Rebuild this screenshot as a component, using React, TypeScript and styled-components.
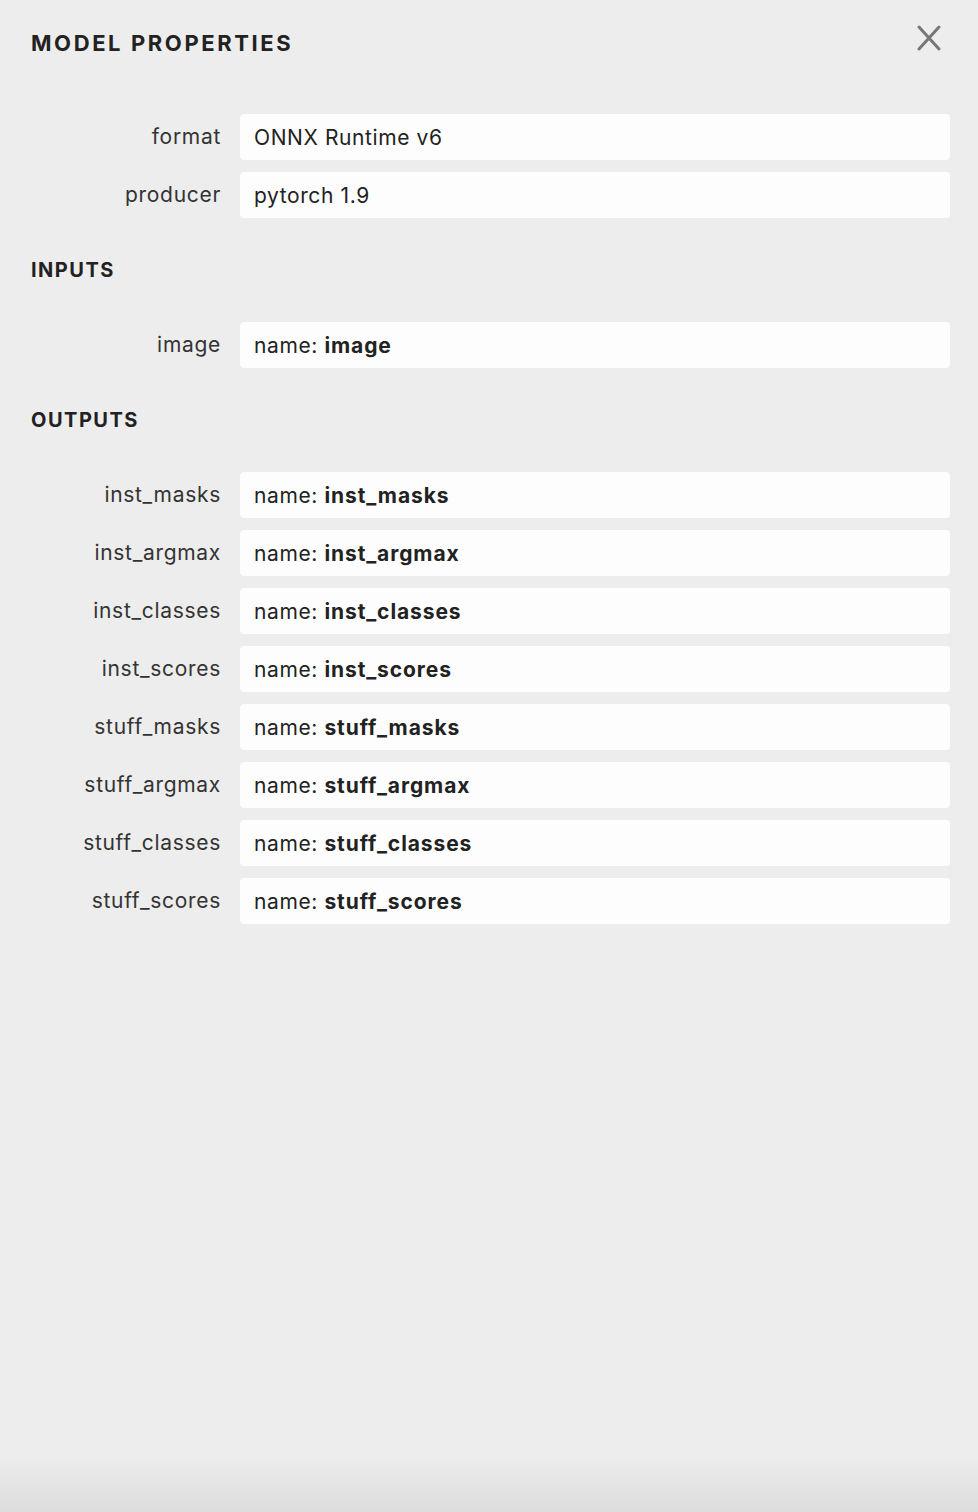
import React from "react";
import styled, { createGlobalStyle } from "styled-components";

const GlobalStyle = createGlobalStyle`
  html, body {
    margin: 0;
    padding: 0;
    background: #ededed;
  }
  body {
    font-family: Inter, "Noto Sans", "Liberation Sans", sans-serif;
    color: #222;
    -webkit-font-smoothing: antialiased;
  }
`;

const Sheet = styled.div`
  min-height: 1512px;
  box-sizing: border-box;
  padding: 24px 28px 0 31px;
  background: linear-gradient(to bottom, #ededed 0, #ededed 1455px, #dcdcdc 1512px);
`;

const Header = styled.div`
  display: flex;
  align-items: center;
  justify-content: space-between;
  height: 38px;
`;

const Title = styled.h1`
  margin: 0;
  font-size: 22px;
  font-weight: 700;
  letter-spacing: 2.6px;
  color: #222;
  line-height: 38px;
`;

const CloseButton = styled.button`
  background: none;
  border: 0;
  padding: 0;
  margin: -10px 6px 0 0;
  width: 30px;
  height: 30px;
  display: flex;
  align-items: center;
  justify-content: center;
  color: #777;
  cursor: pointer;
`;

const Section = styled.div<{ $first?: boolean }>`
  margin-top: ${(p) => (p.$first ? "52px" : "0")};
`;

const SectionTitle = styled.h2`
  margin: 40px 0;
  font-size: 20px;
  font-weight: 700;
  letter-spacing: 1.5px;
  line-height: 24px;
  color: #222;
`;

const Grid = styled.div`
  display: grid;
  grid-template-columns: 189px 1fr;
  column-gap: 20px;
  row-gap: 12px;
`;

const Label = styled.div`
  text-align: right;
  font-size: 21px;
  letter-spacing: 0.7px;
  margin-right: -1px;
  line-height: 46px;
  height: 46px;
  color: #333;
  white-space: nowrap;
`;

const Value = styled.div`
  background: #fdfdfd;
  border-radius: 4px;
  height: 46px;
  box-sizing: border-box;
  padding: 2px 14px 0;
  line-height: 44px;
  font-size: 21px;
  letter-spacing: 0.6px;
  color: #222;
  white-space: nowrap;
  overflow: hidden;

  b {
    font-weight: 700;
    letter-spacing: 0.9px;
  }
`;

const CloseIcon = () => (
  <svg width="24" height="26" viewBox="0 0 24 26" fill="none">
    <path d="M2 2 L22 24 M22 2 L2 24" stroke="currentColor" strokeWidth="3" strokeLinecap="round" />
  </svg>
);

const outputs = [
  "inst_masks",
  "inst_argmax",
  "inst_classes",
  "inst_scores",
  "stuff_masks",
  "stuff_argmax",
  "stuff_classes",
  "stuff_scores",
];

export default function App() {
  return (
    <>
      <GlobalStyle />
      <Sheet>
        <Header>
          <Title>MODEL PROPERTIES</Title>
          <CloseButton aria-label="close">
            <CloseIcon />
          </CloseButton>
        </Header>

        <Section $first>
          <Grid>
            <Label>format</Label>
            <Value>ONNX Runtime v6</Value>
            <Label>producer</Label>
            <Value>pytorch 1.9</Value>
          </Grid>
        </Section>

        <Section>
          <SectionTitle>INPUTS</SectionTitle>
          <Grid>
            <Label>image</Label>
            <Value>
              name: <b>image</b>
            </Value>
          </Grid>
        </Section>

        <Section>
          <SectionTitle>OUTPUTS</SectionTitle>
          <Grid>
            {outputs.map((o) => (
              <React.Fragment key={o}>
                <Label>{o}</Label>
                <Value>
                  name: <b>{o}</b>
                </Value>
              </React.Fragment>
            ))}
          </Grid>
        </Section>
      </Sheet>
    </>
  );
}
